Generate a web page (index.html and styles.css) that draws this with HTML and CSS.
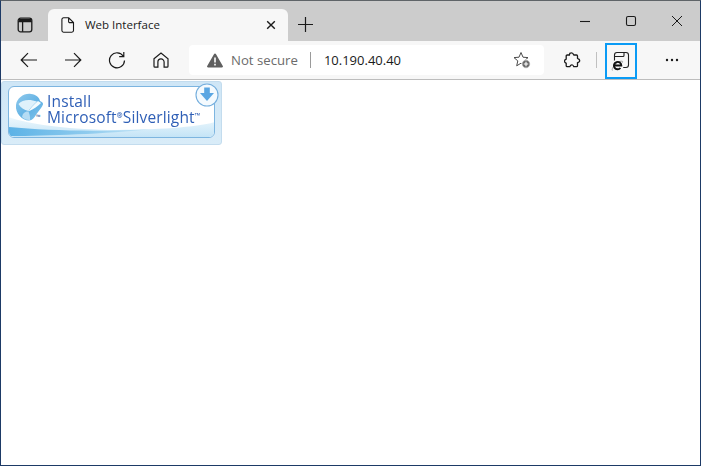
FILE: index.html
```html
<!DOCTYPE html>
<html lang="en">
<head>
<meta charset="utf-8">
<title>Web Interface</title>
<link rel="stylesheet" href="styles.css">
</head>
<body>
<div class="window">
  <header class="tabstrip">
    <button class="strip-btn sidebar-btn" aria-label="Tab actions">
      <svg width="16" height="16" viewBox="0 0 16 16" fill="none" stroke="#1a1a1a" stroke-width="1.3"><rect x="1.2" y="1.2" width="13.6" height="13.6" rx="2.4"/><path d="M1.2 4.6h13.6M5.6 4.6v10.2" /><path d="M2 2h12v2.6H2z" fill="#1a1a1a" stroke="none"/></svg>
    </button>
    <div class="tab">
      <svg class="tab-icon" width="14" height="16" viewBox="0 0 14 16" fill="none" stroke="#1a1a1a" stroke-width="1.1"><path d="M2.5.8h5.2l4.8 4.8v8a1.6 1.6 0 0 1-1.6 1.6H2.5A1.6 1.6 0 0 1 .9 13.6V2.4A1.6 1.6 0 0 1 2.5.8zM7.6.8v3.6a1.2 1.2 0 0 0 1.2 1.2h3.7"/></svg>
      <span class="tab-title">Web Interface</span>
      <svg class="tab-close" width="10" height="10" viewBox="0 0 10 10" stroke="#1a1a1a" stroke-width="1.4"><path d="M1.2 1.2l7.6 7.6M8.8 1.2L1.2 8.8"/></svg>
    </div>
    <button class="strip-btn plus-btn" aria-label="New tab">
      <svg width="15" height="15" viewBox="0 0 15 15" stroke="#1a1a1a" stroke-width="1.2"><path d="M7.5 0v15M0 7.5h15"/></svg>
    </button>
    <div class="win-controls">
      <svg width="46" height="12" viewBox="0 0 46 12" stroke="#1a1a1a" stroke-width="1.1"><path d="M18 6.5h10"/></svg>
      <svg width="46" height="12" viewBox="0 0 46 12" fill="none" stroke="#1a1a1a" stroke-width="1.1"><rect x="18.5" y="1.5" width="9" height="9" rx="1.6"/></svg>
      <svg width="46" height="12" viewBox="0 0 46 12" stroke="#1a1a1a" stroke-width="1"><path d="M18 1l10 10M28 1L18 11"/></svg>
    </div>
  </header>
  <nav class="toolbar">
    <button class="tool-btn" aria-label="Back"><svg width="18" height="16" viewBox="0 0 18 16" fill="none" stroke="#1a1a1a" stroke-width="1.2"><path d="M17 8H1.2M8 1.2L1.2 8 8 14.8"/></svg></button>
    <button class="tool-btn" aria-label="Forward"><svg width="18" height="16" viewBox="0 0 18 16" fill="none" stroke="#1a1a1a" stroke-width="1.2"><path d="M1 8h15.8M10 1.2L16.8 8 10 14.8"/></svg></button>
    <button class="tool-btn" aria-label="Refresh"><svg width="18" height="18" viewBox="0 0 18 18" fill="none" stroke="#1a1a1a" stroke-width="1.2"><path d="M15.3 5.2A7.5 7.5 0 1 0 16.5 9.5M15.8 1v4.6h-4.6"/></svg></button>
    <button class="tool-btn" aria-label="Home"><svg width="16" height="16" viewBox="0 0 16 16" fill="none" stroke="#1a1a1a" stroke-width="1.2"><path d="M1 6.8L8 1l7 5.8v7.4a.9.9 0 0 1-.9.9h-3V10a3.100 3.100 0 0 0-6.200 0v5.100h-3a.9.9 0 0 1-.9-.9z"/></svg></button>
    <div class="address">
      <svg class="warn" width="16" height="15" viewBox="0 0 16 15"><path d="M8 .5a1 1 0 0 1 .9.5l6.900 12a1 1 0 0 1-.9 1.500H1.100a1 1 0 0 1-.9-1.500L7.100 1A1 1 0 0 1 8 .5z" fill="#5f5f5f"/><path d="M7.200 4.500h1.600v5H7.200zM7.200 10.800h1.600v1.600H7.200z" fill="#fff"/></svg>
      <span class="not-secure">Not secure</span>
      <span class="addr-divider"></span>
      <span class="url">10.190.40.40</span>
      <svg class="star" width="18" height="18" viewBox="0 0 18 18"><path d="M8 1.500l2 4.700 5 .4-3.800 3.300 1.100 4.900L8 12.200l-4.300 2.600 1.100-4.900L1 6.600l5-.4z" fill="none" stroke="#4a4a4a" stroke-width="1"/><circle cx="13" cy="13" r="4.200" fill="#6a6a6a" stroke="#fff"/><path d="M13 10.800v4.400M10.800 13h4.400" stroke="#fff" stroke-width="1.100"/></svg>
    </div>
    <button class="tool-btn ext-btn" aria-label="Extensions"><svg width="17" height="17" viewBox="0 0 17 17" fill="none" stroke="#1a1a1a" stroke-width="1.3"><path d="M6.500 1.200c1-.6 2.200-.2 2.700.8.200.4.300.8.600 1h2.700a1 1 0 0 1 1 1v2.400c.3.400.8.400 1.300.7.900.6 1.100 1.700.5 2.600-.4.500-1.200.6-1.800 1v3a1 1 0 0 1-1 1H9.800c-.3-.7-.5-1.400-1.300-1.700-1-.3-2 .2-2.400 1.100l-.3.600H3.200a1 1 0 0 1-1-1v-2.500c-.5-.4-1.100-.5-1.400-1.100C.3 8.900.7 7.800 1.700 7.400l.5-.3V4a1 1 0 0 1 1-1h2.200c.2-.7.100-1.300.6-1.800z"/></svg></button>
    <span class="tool-divider"></span>
    <button class="tool-btn ie-btn" aria-label="Internet Explorer mode">
      <svg width="20" height="22" viewBox="0 0 20 22">
        <rect x="3.500" y="2.500" width="14" height="15" rx="2.500" fill="none" stroke="#222" stroke-width="1.100"/>
        <path d="M3.500 6.500h8.500a1 1 0 0 0 1-1V2.500" fill="none" stroke="#222" stroke-width="1.100"/>
        <circle cx="6.600" cy="15.500" r="6" fill="#f7f7f7"/>
        <path d="M1.500 20.500c-1.500-1 2-6.500 6-8.500 3-1.400 5-1 4 .6" fill="none" stroke="#888" stroke-width=".8"/>
        <path d="M2.900 15.500h7.400A3.700 3.700 0 1 0 9.400 18" fill="none" stroke="#111" stroke-width="1.900"/>
      </svg>
    </button>
    <button class="tool-btn more-btn" aria-label="More"><svg width="14" height="4" viewBox="0 0 14 4" fill="#1a1a1a"><circle cx="2" cy="2" r="1.200"/><circle cx="7" cy="2" r="1.200"/><circle cx="12" cy="2" r="1.200"/></svg></button>
  </nav>
  <main class="content">
    <a class="sl-frame" href="#">
      <div class="sl-panel">
        <svg class="sl-swoosh" width="207" height="52" viewBox="0 0 207 52">
          <defs>
            <linearGradient id="pale" x1="0" x2="0" y1="0" y2="1"><stop offset="0" stop-color="#eef8fd"/><stop offset="1" stop-color="#c2e3f6"/></linearGradient>
            <linearGradient id="band" x1="0" x2="1" y1="0" y2="0"><stop offset="0" stop-color="#5cb2e6"/><stop offset=".55" stop-color="#8fcbee"/><stop offset="1" stop-color="#c8e7f7"/></linearGradient>
          </defs>
          <path d="M0 31C20 38 55 43 100 44C150 44 190 41 207 36V52H0z" fill="url(#pale)"/>
          <path d="M0 41C40 45 95 46 145 43C95 48 40 50 0 50z" fill="url(#band)"/>
        </svg>
        <svg class="sl-logo" width="29" height="29" viewBox="0 0 29 29">
          <defs><linearGradient id="globe" x1="0" x2="1" y1="0" y2="1"><stop offset="0" stop-color="#8fc9ec"/><stop offset=".55" stop-color="#62b2e4"/><stop offset="1" stop-color="#84c5ec"/></linearGradient></defs>
          <path d="M1 12C2 5 9 0 16 1c5 .6 8 3 9 7 2 1 3.500 2 3 3.500-1 3-4 6-6.500 9.500-2 3.500-4 6.500-7.500 6.500C7 27.500 0 20 1 12z" fill="url(#globe)"/>
          <path d="M3.500 11C7 7 14 5.500 22 8.500c-3.500 3-6 5.500-8.500 9.500C9 17 5.500 14.500 3.500 11z" fill="#dff1fb"/>
          <path d="M7 24c.5-3.500 3-6 6.500-5.500 1.200 3 1.800 5.500 1.500 8.500-3 .5-6-1-8-3z" fill="#b5dcf4"/>
          <path d="M13.500 18.500C16 14 19 11.500 23 8l3 2c-3 3-7 6-12.500 8.500z" fill="#f4fbfe"/>
        </svg>
        <span class="sl-logo-tm">™</span>
        <div class="sl-text">
          <div class="sl-line">Install</div>
          <div class="sl-line">Microsoft<sup class="sl-mark">®</sup>Silverlight<sup class="sl-tm">™</sup></div>
        </div>
      </div>
      <svg class="sl-badge" width="24" height="24" viewBox="0 0 24 24"><circle cx="12" cy="12" r="11" fill="#f4fafe" stroke="#74aedd" stroke-width="1.100"/><path d="M9.200 4.500h5.600v5.500h4.200L12 18 5 10h4.200z" fill="#5aa6e2"/></svg>
    </a>
  </main>
</div>
</body>
</html>
```
FILE: styles.css
```css
* { box-sizing: border-box; }
html, body { margin: 0; height: 100%; background: #fff; }
body { font-family: "Noto Sans", "Open Sans", sans-serif; overflow: hidden; }
button { background: none; border: 0; padding: 0; margin: 0; display: flex; align-items: center; justify-content: center; }

.window {
  width: 701px; height: 466px;
  display: flex; flex-direction: column;
  border-left: 1px solid #1d3a66;
  border-right: 1px solid #1d3a66;
  border-bottom: 1px solid #1d3a66;
  border-top: 1px solid #5f6468;
}

.tabstrip {
  height: 40px; flex: none;
  display: flex; align-items: flex-end;
  background: #cccccc;
}
.strip-btn { height: 32px; }
.sidebar-btn { width: 47px; padding-left: 1px; }
.plus-btn { width: 34px; padding-bottom: 1px; }
.tab {
  width: 240px; height: 32px;
  display: flex; align-items: center;
  background: #f7f7f7;
  border-radius: 6px 6px 0 0;
  padding: 0 12px 0 13px;
}
.tab-icon { flex: none; }
.tab-title { margin-left: 10px; font-size: 11.5px; line-height: 14px; padding-bottom: 1px; color: #1a1a1a; flex: 1; font-family: "Open Sans", sans-serif; }
.tab-close { flex: none; }
.win-controls { margin-left: auto; height: 40px; display: flex; align-items: center; }

.toolbar {
  height: 39px; flex: none;
  display: flex; align-items: center;
  background: #f7f7f7;
  border-bottom: 1px solid #bdbdbd;
  padding-left: 6px;
}
.tool-btn { width: 44px; height: 36px; flex: none; }
.address {
  width: 355px; height: 30px; margin-left: 6px;
  display: flex; align-items: center;
  background: #fff; border-radius: 4px;
  padding-left: 18px;
}
.warn { flex: none; }
.not-secure { margin-left: 8px; font-size: 13.2px; color: #6b6b6b; font-family: "Open Sans", sans-serif; }
.addr-divider { width: 1px; height: 16px; background: #9a9a9a; margin: 0 13px 0 12px; }
.url { font-size: 13px; color: #1a1a1a; flex: 1; font-family: "Open Sans", sans-serif; }
.star { flex: none; margin-right: 13px; }
.ext-btn { margin-left: 6px; }
.tool-divider { width: 1px; height: 16px; background: #c0c0c0; margin-left: 2px; }
.ie-btn { width: 32px; height: 36px; margin-left: 8px; border: 2px solid #0a9bf5; align-self: flex-end; }
.more-btn { margin-left: 13px; }

.content { flex: 1; background: #fff; padding-top: 1px; }
.sl-frame {
  position: relative;
  display: block; width: 221px; height: 64px;
  padding: 4px 6px 6px 6px;
  background: linear-gradient(#cfe6f6, #d9ecf8);
  border: 1px solid #c3dcee;
  border-radius: 3px;
  text-decoration: none;
}
.sl-panel {
  position: relative; overflow: hidden;
  height: 100%;
  display: flex; align-items: flex-start;
  background: #fff;
  border: 1px solid #7db5e0;
  border-radius: 6px;
  padding: 6px 0 0 6px;
}
.sl-swoosh { position: absolute; left: -1px; top: -1px; }
.sl-logo { position: relative; flex: none; }
.sl-logo-tm { position: absolute; left: 27px; top: 26px; font-size: 6px; line-height: 8px; font-weight: 700; color: #2f5a94; font-family: "Open Sans", sans-serif; }
.sl-text { position: relative; margin-left: 3px; color: #2f5fb6; font-family: "Open Sans", sans-serif; font-size: 15.5px; line-height: 16px; letter-spacing: .15px; filter: blur(.25px); }
.sl-line { white-space: nowrap; }
.sl-mark { font-size: 7px; line-height: 0; vertical-align: 5px; font-weight: 700; }
.sl-tm { font-size: 7px; line-height: 0; vertical-align: 5px; font-weight: 700; }
.sl-badge { position: absolute; right: 2px; top: 1px; }
```
